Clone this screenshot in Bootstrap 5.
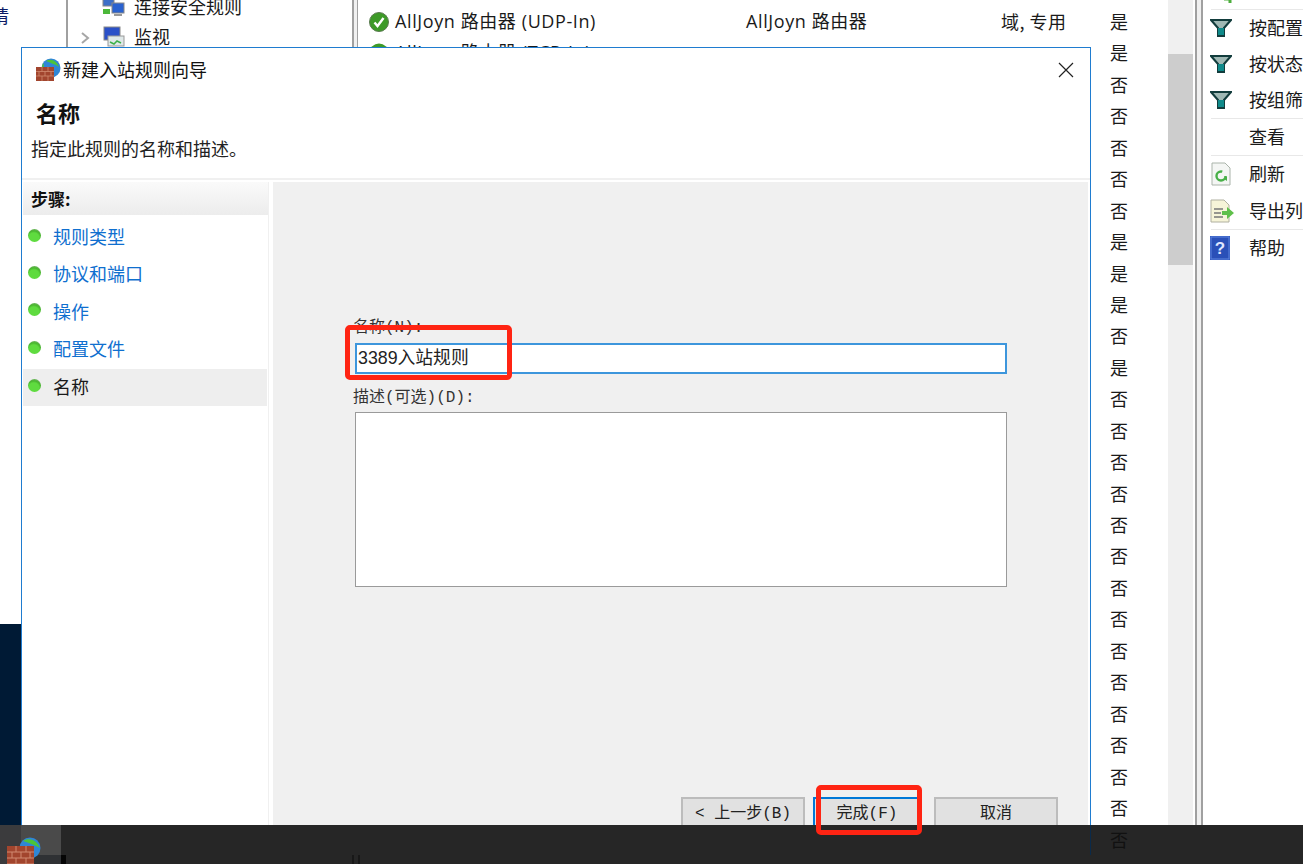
<!doctype html>
<html lang="zh">
<head>
<meta charset="utf-8">
<link href="https://cdn.jsdelivr.net/npm/bootstrap@5.3.0/dist/css/bootstrap.min.css" rel="stylesheet">
<style>
html,body{height:100%;margin:0;overflow:hidden;background:#fff}
body{font-family:"Noto Sans CJK SC","Liberation Sans",sans-serif;color:#1a1a1a;font-size:18px;line-height:1.2}
.desk{position:relative;width:1303px;height:864px;overflow:hidden;background:#fff}
.desk-wall{position:absolute;left:0;top:624px;width:22px;height:201px;background:#001a35}
.desk-frag{position:absolute;left:-9px;top:5px;font-size:18px;color:#0c1a66;line-height:20px;white-space:nowrap}
.bg-window{position:absolute;left:66px;top:-10px;width:1237px;height:874px;background:#fff}
.bg-tree{position:absolute;left:0;top:0;width:288px;height:100%;border-left:2px solid #a0a0a0;border-right:2px solid #a0a0a0}
.bg-tree-gap{position:absolute;left:288px;top:0;width:4px;height:100%;background:#f0f0f0;border-right:1px solid #a0a0a0}
.tree-item{position:absolute;left:34px;gap:8px;height:24px;font-size:18px}
.tree-a{top:5px}.tree-b{top:35px}
.tree-chev{position:absolute;left:11px;top:41px}
.fw-row{position:absolute;left:303px;top:20px;height:24px}
.fw-row.fw-two{top:51px}
.fw-name{width:354px;padding-left:3px;font-family:"Open Sans","Noto Sans CJK SC",sans-serif;font-size:18px;letter-spacing:.6px;white-space:nowrap;margin-left:3px}
.fw-group{width:255px;font-family:"Open Sans","Noto Sans CJK SC",sans-serif;font-size:18px;letter-spacing:.6px;white-space:nowrap}
.fw-prof{font-size:18px;letter-spacing:.5px;white-space:nowrap}
.yesno{position:absolute;left:1044px;top:16px;font-size:18px;width:20px}
.yesno span{display:block;height:31.45px;line-height:31.45px}
.scroll-track{position:absolute;left:1102px;top:0;width:25px;height:100%;background:#f0f0f0}
.scroll-thumb{position:absolute;left:0;top:64px;width:25px;height:211px;background:#cdcdcd}
.pane-split{position:absolute;left:1129px;top:0;width:8px;height:100%;background:#f0f0f0;border-left:2px solid #a0a0a0;border-right:2px solid #a0a0a0}
.act-list{position:absolute;left:1137px;top:0;width:100px;height:100%;overflow:hidden}
.act{position:absolute;left:0;width:100px;height:34px;white-space:nowrap;overflow:hidden}
.act svg{position:absolute;left:7px}
.act span{position:absolute;left:46px}
.act-sep{position:absolute;left:8px;width:92px;height:1px;background:#e8e8e8}
.a0{top:-8px}.a1{top:21px}.a2{top:57px}.a3{top:93px}.a4{top:130px}.a5{top:167px}.a6{top:204px}.a7{top:241px}
.s1{top:19px}.s2{top:128px}.s3{top:165px}.s4{top:239px}
.wizard{position:absolute;left:21px;top:47px;width:1070px;height:810px;background:#fff;border:solid #1f7cd0;border-width:1px 1px 0 1px}
.wiz-title{height:44px;padding-left:13px;font-size:18px;color:#111}
.wiz-x{margin-left:auto;margin-right:16px}
.wiz-h{font-size:22px;font-weight:700;padding-left:14px;height:30px;line-height:30px;margin-top:5px;color:#111}
.wiz-sub{padding-left:9px;font-size:18px;height:26px;line-height:26px;margin-top:8px;color:#222}
.wiz-body{position:absolute;left:0;top:130px;right:0;bottom:0;gap:4px;border-top:2px solid #f0f0f0;padding:2px 1px 0 1px;background:#fff}
.wiz-steps{width:246px;flex:none;border-right:1px solid #f0f0f0;background:#fff}
.steps-h{height:33px;line-height:33px;padding-left:8px;font-weight:700;font-size:17px;color:#111;background:linear-gradient(#fafafa,#ececec);margin-bottom:3px}
.step{height:37.4px;padding-left:5px;gap:12px;color:#0f6fcf;font-size:18px;width:244px}
.step.on{background:#eeeeee;color:#1a1a1a;height:37px;margin-top:1px}
.dot{width:13px;height:13px;border-radius:50%;flex:none;margin-top:-3px;background:radial-gradient(circle at 45% 70%,#5fdb3f 0 45%,#49b52f 62%,#a3b8a0 100%)}
.wiz-main{flex:1;background:#f0f0f0;position:relative;padding:134px 0 0 82px;margin-right:1px}
.fld-label{font-family:"Liberation Mono","Noto Sans CJK SC",monospace;font-size:16px;line-height:24px;height:24px;color:#333;margin-left:-2px}
.name-box{width:652px;height:31px;margin-top:3px;border:2px solid #3d96dc;background:#fff;font-size:17.8px;line-height:27px;padding:0 0 0 1px;color:#222;font-family:"Liberation Sans","Noto Sans CJK SC",sans-serif}
.desc-label{margin-top:12px}
.desc-box{width:652px;height:175px;margin-top:2px;border:1px solid #9a9a9a;background:#fff}
.wiz-btns{position:absolute;left:408px;top:615px;gap:13px}
.btn.wbtn{width:124px;height:34px;background:#e1e1e1;border:2px solid #bcbcbc;font-family:"Liberation Mono","Noto Sans CJK SC",monospace;font-size:16px;color:#222;text-align:center;line-height:29px;padding:0;border-radius:0}
.btn.wbtn.pri{width:108px;border-color:#0078d7;margin-left:-5px}
.mark-box{position:absolute;border:5px solid #ff2413;border-radius:5px;pointer-events:none}
.mark-a{left:345px;top:325px;width:167px;height:55px}
.mark-b{left:816px;top:785px;width:106px;height:50px}
.taskbar{position:absolute;left:0;top:825px;width:1303px;height:39px;background:#262626}
.task-on{position:absolute;left:0;top:0;width:61px;height:39px;background:#4a4a4a}
.task-on-l{position:absolute;left:0;top:0;width:21px;height:39px;background:#3b3b3d}
.task-tail{position:absolute;left:34px;top:30px;width:27px;height:9px;background:#2f3134}
.task-blk{position:absolute;left:61px;top:30px;width:5px;height:9px;background:#050505}
.task-ic{position:absolute;left:7px;top:12px}
.task-fg{position:absolute;left:1090px;top:0;width:1px;height:30px;background:#0a2a4a}
.task-no{position:absolute;left:1110px;top:4px;font-size:18px;color:#111}
.task-bar1,.task-bar2{position:absolute;top:30px;width:2px;height:9px;background:#181818}
.task-bar1{left:352px}.task-bar2{left:358px}
</style>
</head>
<body>
<div class="desk">
  <div class="desk-frag">请</div>
  <div class="desk-wall"></div>

  <div class="bg-window">
    <div class="bg-tree">
      <div class="tree-item tree-a d-flex align-items-center"><svg width="24" height="22" viewBox="0 0 24 22"><rect x="1" y="1" width="11" height="9" fill="#3c6fc8" stroke="#888"/><rect x="10" y="7" width="12" height="10" fill="#2a62d0" stroke="#888"/><rect x="1" y="13" width="7" height="5" fill="#4cb83a"/><rect x="12" y="18" width="8" height="2" fill="#999"/></svg><span>连接安全规则</span></div>
      <svg class="tree-chev" width="12" height="14" viewBox="0 0 12 14"><path d="M3 2l6 5-6 5" fill="none" stroke="#a6a6a6" stroke-width="2"/></svg>
      <div class="tree-item tree-b d-flex align-items-center"><svg width="24" height="22" viewBox="0 0 24 22"><rect x="2" y="1" width="16" height="13" fill="#2a50c8" stroke="#888"/><rect x="6" y="10" width="16" height="10" fill="#dfe8e8" stroke="#999"/><path d="M8 16l4 2 3-3 4 2" fill="none" stroke="#3cb04a" stroke-width="1.5"/></svg><span>监视</span></div>
    </div>
    <div class="bg-tree-gap"></div>

    <div class="fw-row d-flex align-items-center">
      <svg width="20" height="20" viewBox="0 0 20 20"><circle cx="10" cy="10" r="9.500" fill="#3d9a28"/><circle cx="10" cy="10" r="9.500" fill="none" stroke="#5a7a50"/><path d="M5.500 10.500l3 3.500 6-8" fill="none" stroke="#fff" stroke-width="2.400"/></svg>
      <span class="fw-name">AllJoyn 路由器 (UDP-In)</span><span class="fw-group">AllJoyn 路由器</span><span class="fw-prof">域, 专用</span>
    </div>
    <div class="fw-row fw-two d-flex align-items-center">
      <svg width="20" height="20" viewBox="0 0 20 20"><circle cx="10" cy="10" r="9.500" fill="#3d9a28"/></svg>
      <span class="fw-name">AllJoyn 路由器 (TCP-In)</span>
    </div>

    <div class="yesno" id="yn"></div>

    <div class="scroll-track"><div class="scroll-thumb"></div></div>
    <div class="pane-split"></div>

    <div class="act-list">
      <div class="act a0 d-flex align-items-center"><svg width="24" height="20" viewBox="0 0 24 20"><path d="M4 8h14" stroke="#a04030" stroke-width="3"/><path d="M14 10h6v4" stroke="#4cae3c" stroke-width="3" fill="none"/></svg></div>
      <div class="act-sep s1"></div>
      <div class="act a1 d-flex align-items-center"><svg width="22" height="20" viewBox="0 0 22 20"><path d="M1 2h20l-7 8v8h-6v-8z" fill="#9fb8b4" stroke="#123c3c" stroke-width="2"/><path d="M8 10h6v7H8z" fill="#0f8a8a"/></svg><span>按配置</span></div>
      <div class="act a2 d-flex align-items-center"><svg width="22" height="20" viewBox="0 0 22 20"><path d="M1 2h20l-7 8v8h-6v-8z" fill="#9fb8b4" stroke="#123c3c" stroke-width="2"/><path d="M8 10h6v7H8z" fill="#0f8a8a"/></svg><span>按状态</span></div>
      <div class="act a3 d-flex align-items-center"><svg width="22" height="20" viewBox="0 0 22 20"><path d="M1 2h20l-7 8v8h-6v-8z" fill="#9fb8b4" stroke="#123c3c" stroke-width="2"/><path d="M8 10h6v7H8z" fill="#0f8a8a"/></svg><span>按组筛</span></div>
      <div class="act-sep s2"></div>
      <div class="act a4 d-flex align-items-center"><span>查看</span></div>
      <div class="act-sep s3"></div>
      <div class="act a5 d-flex align-items-center"><svg width="22" height="24" viewBox="0 0 22 24"><path d="M2 1h13l5 5v17H2z" fill="#f4f6f4" stroke="#aab4aa"/><circle cx="11" cy="14" r="4.500" fill="none" stroke="#48b048" stroke-width="2.400" stroke-dasharray="22 6"/><path d="M14 17l3 2v-5z" fill="#48b048"/></svg><span>刷新</span></div>
      <div class="act a6 d-flex align-items-center"><svg width="26" height="24" viewBox="0 0 26 24"><path d="M1 1h13l5 5v17H1z" fill="#f6f4d8" stroke="#b0b0a0"/><path d="M4 10h9M4 14h7M4 18h9" stroke="#777" stroke-width="1.400"/><path d="M12 12h5V8l7 6-7 6v-4h-5z" fill="#5fc04a"/></svg><span>导出列</span></div>
      <div class="act-sep s4"></div>
      <div class="act a7 d-flex align-items-center"><svg width="20" height="24" viewBox="0 0 20 24"><rect width="20" height="24" fill="#2a50b8"/><rect x="1" y="1" width="18" height="22" fill="none" stroke="#5f86e0"/><text x="10" y="18" font-size="17" font-weight="700" fill="#dfe6ff" text-anchor="middle" font-family="Liberation Sans">?</text></svg><span>帮助</span></div>
    </div>
  </div>

  <div class="wizard">
    <div class="wiz-title d-flex align-items-center">
      <svg width="28" height="24" viewBox="0 0 28 24"><circle cx="16" cy="10" r="9.500" fill="#2f86d6"/><path d="M11 3c5-3 11 0 13 6-4-3-9-4-13-6z" fill="#4cc43a"/><path d="M8 5c2 3 0 6-2 7z" fill="#4cc43a"/><rect x="1" y="9" width="18" height="14" fill="#a2452e"/><path d="M1 13.500h18M1 18h18M7 9v4.500M13 9v4.500M4 13.500V18M10 13.500V18M16 13.500V18M7 18v5M13 18v5" stroke="#d08a70" stroke-width=".8"/></svg>
      <span>新建入站规则向导</span>
      <svg class="wiz-x" width="16" height="16" viewBox="0 0 16 16"><path d="M1 1l14 14M15 1L1 15" stroke="#222" stroke-width="1.200"/></svg>
    </div>
    <div class="wiz-h">名称</div>
    <div class="wiz-sub">指定此规则的名称和描述。</div>
    <div class="wiz-body d-flex">
      <div class="wiz-steps">
        <div class="steps-h">步骤:</div>
        <div class="step d-flex align-items-center"><i class="dot"></i><span>规则类型</span></div>
        <div class="step d-flex align-items-center"><i class="dot"></i><span>协议和端口</span></div>
        <div class="step d-flex align-items-center"><i class="dot"></i><span>操作</span></div>
        <div class="step d-flex align-items-center"><i class="dot"></i><span>配置文件</span></div>
        <div class="step on d-flex align-items-center"><i class="dot"></i><span>名称</span></div>
      </div>
      <div class="wiz-main">
        <div class="fld-label">名称(N):</div>
        <div class="name-box">3389入站规则</div>
        <div class="fld-label desc-label">描述(可选)(D):</div>
        <div class="desc-box"></div>
        <div class="wiz-btns d-flex">
          <button class="btn wbtn" type="button">&lt; 上一步(B)</button>
          <button class="btn wbtn pri" type="button">完成(F)</button>
          <button class="btn wbtn" type="button">取消</button>
        </div>
      </div>
    </div>
  </div>

  <div class="mark-box mark-a"></div>

  <div class="taskbar">
    <div class="task-on"></div>
    <div class="task-on-l"></div>
    <div class="task-tail"></div>
    <div class="task-blk"></div>
    <div class="task-bar1"></div>
    <div class="task-bar2"></div>
    <div class="task-fg"></div>
    <div class="task-no">否</div>
    <svg class="task-ic" width="36" height="30" viewBox="0 0 36 30"><circle cx="23" cy="11" r="10.500" fill="#2f86d6"/><path d="M16 4c6-4 14-1 17 7-5-3-11-5-17-7z" fill="#4cc43a"/><rect x="0" y="9" width="27" height="21" fill="#a2452e"/><path d="M0 15h27M0 21h27M0 27h27M9 9v6M19 9v6M5 15v6M14 15v6M23 15v6M9 21v6M19 21v6" stroke="#d08a70"/></svg>
  </div>
  <div class="mark-box mark-b"></div>
</div>
<script>
var seq="是是否否否否否是是是否是否否否否否否否否否否否否否否否否否";
document.getElementById("yn").innerHTML=seq.split("").map(function(c){return "<span>"+c+"</span>"}).join("");
</script>
<script src="https://cdn.jsdelivr.net/npm/bootstrap@5.3.0/dist/js/bootstrap.bundle.min.js"></script>
</body>
</html>
